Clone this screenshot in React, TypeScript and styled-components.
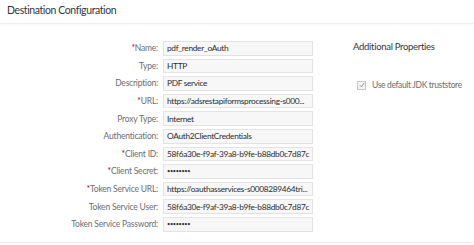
import React from "react";
import styled, { createGlobalStyle } from "styled-components";

const Global = createGlobalStyle`
  html, body { margin: 0; padding: 0; background: #fff; }
  body { font-family: Lato, "Liberation Sans", Arial, sans-serif; }
`;

const Page = styled.div`
  width: 474px;
  height: 245px;
  overflow: hidden;
  display: flex;
  flex-direction: column;
`;

const Header = styled.div`
  box-sizing: border-box;
  height: 24px;
  border-bottom: 1px solid #ececec;
  box-shadow: 0 1px 2px rgba(0, 0, 0, 0.03);
  padding: 4px 0 0 7px;
  line-height: 13px;
  font-size: 10.5px;
  letter-spacing: -0.4px;
  color: #32363a;
`;

const Body = styled.div`
  display: flex;
  padding-top: 17px;
  height: 201px;
  border-bottom: 1px solid #e8e8e8;
  margin-right: 3px;
`;

const Form = styled.div`
  display: grid;
  grid-template-columns: 158px 150px;
  column-gap: 5px;
  row-gap: 3px;
  grid-auto-rows: 14.6px;
  align-items: center;
`;

const Label = styled.div`
  text-align: right;
  font-size: 8.5px;
  letter-spacing: -0.2px;
  color: #6a6d70;
  white-space: nowrap;
`;

const Star = styled.span`
  color: #bb0000;
`;

const Input = styled.div<{ $secret?: boolean }>`
  box-sizing: border-box;
  height: 14.6px;
  border: 1px solid #e3e3e3;
  background: #f7f7f7;
  padding: 0 3px;
  font-size: ${(p) => (p.$secret ? "5.5px" : "8.3px")};
  letter-spacing: ${(p) => (p.$secret ? "-0.3px" : "-0.3px")};
  color: #2a2d30;
  display: flex;
  align-items: center;
  white-space: nowrap;
  overflow: hidden;
`;

const Side = styled.div`
  margin-left: 40px;
  display: flex;
  flex-direction: column;
`;

const SideTitle = styled.div`
  font-size: 9.5px;
  letter-spacing: -0.3px;
  line-height: 12px;
  color: #32363a;
  margin-bottom: 27px;
`;

const CheckRow = styled.div`
  display: flex;
  align-items: center;
  gap: 6px;
  padding-left: 4px;
  font-size: 8.5px;
  letter-spacing: -0.35px;
  color: #6a6d70;
  white-space: nowrap;
`;

const Box = styled.div`
  width: 7px;
  height: 7px;
  border: 1px solid #c8c8c8;
  background: #f4f4f4;
  display: flex;
  align-items: center;
  justify-content: center;
`;

const fields: { label: string; value: string; req?: boolean; secret?: boolean }[] = [
  { label: "Name:", value: "pdf_render_oAuth", req: true },
  { label: "Type:", value: "HTTP" },
  { label: "Description:", value: "PDF service" },
  { label: "URL:", value: "https://adsrestapiformsprocessing-s000...", req: true },
  { label: "Proxy Type:", value: "Internet" },
  { label: "Authentication:", value: "OAuth2ClientCredentials" },
  { label: "Client ID:", value: "58f6a30e-f9af-39a8-b9fe-b88db0c7d87c", req: true },
  { label: "Client Secret:", value: "••••••••", req: true, secret: true },
  { label: "Token Service URL:", value: "https://oauthasservices-s0008289464tri...", req: true },
  { label: "Token Service User:", value: "58f6a30e-f9af-39a8-b9fe-b88db0c7d87c" },
  { label: "Token Service Password:", value: "••••••••", secret: true },
];

export default function App() {
  return (
    <Page>
      <Global />
      <Header>Destination Configuration</Header>
      <Body>
        <Form>
          {fields.map((f) => (
            <React.Fragment key={f.label}>
              <Label>
                {f.req && <Star>*</Star>}
                {f.label}
              </Label>
              <Input $secret={f.secret}>{f.value}</Input>
            </React.Fragment>
          ))}
        </Form>
        <Side>
          <SideTitle>Additional Properties</SideTitle>
          <CheckRow>
            <Box>
              <svg width="6" height="6" viewBox="0 0 6 6">
                <path d="M0.8 3.2 L2.4 4.8 L5.2 1" fill="none" stroke="#8a8a8a" strokeWidth="0.9" />
              </svg>
            </Box>
            Use default JDK truststore
          </CheckRow>
        </Side>
      </Body>
    </Page>
  );
}
